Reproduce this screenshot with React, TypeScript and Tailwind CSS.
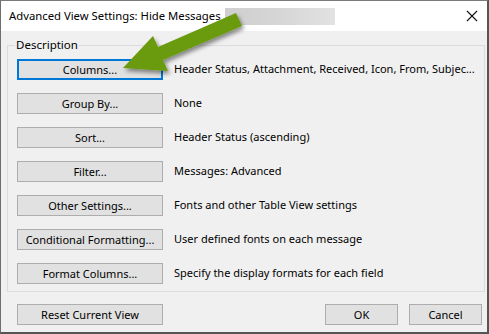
const rows = [
  { label: 'Columns...', text: 'Header Status, Attachment, Received, Icon, From, Subjec...', focused: true },
  { label: 'Group By...', text: 'None' },
  { label: 'Sort...', text: 'Header Status (ascending)' },
  { label: 'Filter...', text: 'Messages: Advanced' },
  { label: 'Other Settings...', text: 'Fonts and other Table View settings' },
  { label: 'Conditional Formatting...', text: 'User defined fonts on each message' },
  { label: 'Format Columns...', text: 'Specify the display formats for each field' },
]

function WinButton({ label, focused, className = '' }: { label: string; focused?: boolean; className?: string }) {
  return (
    <button
      className={`h-[21px] bg-[#e1e1e1] text-black leading-none flex items-center justify-center ${
        focused ? 'border-2 border-[#0078d7]' : 'border border-[#adadad]'
      } ${className}`}
    >
      {label}
    </button>
  )
}

export default function App() {
  return (
    <div
      className="relative w-[489px] h-[334px] overflow-hidden bg-[#f0f0f0] border-t border-l border-t-[#7a7a7a] border-l-[#6e6e6e] border-r-2 border-b-2 border-r-[#555] border-b-[#555] text-[11px] text-black flex flex-col"
      style={{ fontFamily: '"Noto Sans", "Open Sans", sans-serif' }}
    >
      {/* Title bar */}
      <div className="h-[30px] bg-white flex items-center justify-between pl-[8px] pr-[9px] shrink-0 text-[11.3px]">
        <div className="flex items-center gap-[4px]">
          <span>Advanced View Settings: Hide Messages</span>
          <div className="w-[110px] h-[17px] bg-gradient-to-r from-[#cfcfcf] via-[#d6d6d6] to-[#e2e2e2]" />
        </div>
        <svg width="12" height="12" viewBox="0 0 12 12" className="mt-[-1px]">
          <path d="M1 1 L11 11 M11 1 L1 11" stroke="#111" strokeWidth="1.1" />
        </svg>
      </div>

      {/* Body */}
      <div className="flex flex-col pl-[6px] pr-[5px] pt-[6px]">
        <fieldset className="border border-[#dcdcdc] px-[9px] pt-[6px] pb-[7px]">
          <legend className="px-[1px] -ml-[2px] leading-[16px] text-[11.5px]">Description</legend>
          <div className="flex flex-col gap-[13px]">
            {rows.map(r => (
              <div key={r.label} className="flex items-center gap-[11px]">
                <WinButton label={r.label} focused={r.focused} className="w-[146px] shrink-0" />
                <span className="whitespace-nowrap">{r.text}</span>
              </div>
            ))}
          </div>
        </fieldset>

        <div className="flex items-center justify-between pl-[10px] mt-[12px]">
          <WinButton label="Reset Current View" className="w-[146px]" />
          <div className="flex gap-[11px]">
            <WinButton label="OK" className="w-[73px]" />
            <WinButton label="Cancel" className="w-[73px]" />
          </div>
        </div>
      </div>

      {/* Green callout arrow */}
      <svg className="absolute left-0 top-0 pointer-events-none" width="489" height="334">
        <defs>
          <filter id="sh" x="-20%" y="-20%" width="140%" height="160%">
            <feGaussianBlur in="SourceAlpha" stdDeviation="2" />
            <feOffset dx="2" dy="3" result="b" />
            <feComponentTransfer><feFuncA type="linear" slope="0.45" /></feComponentTransfer>
            <feMerge><feMergeNode /><feMergeNode in="SourceGraphic" /></feMerge>
          </filter>
        </defs>
        <polygon
          points="235,12 241,25 162,59 167,70 122,67 152,35 157,46"
          fill="#6a9a0c"
          filter="url(#sh)"
        />
      </svg>
    </div>
  )
}
